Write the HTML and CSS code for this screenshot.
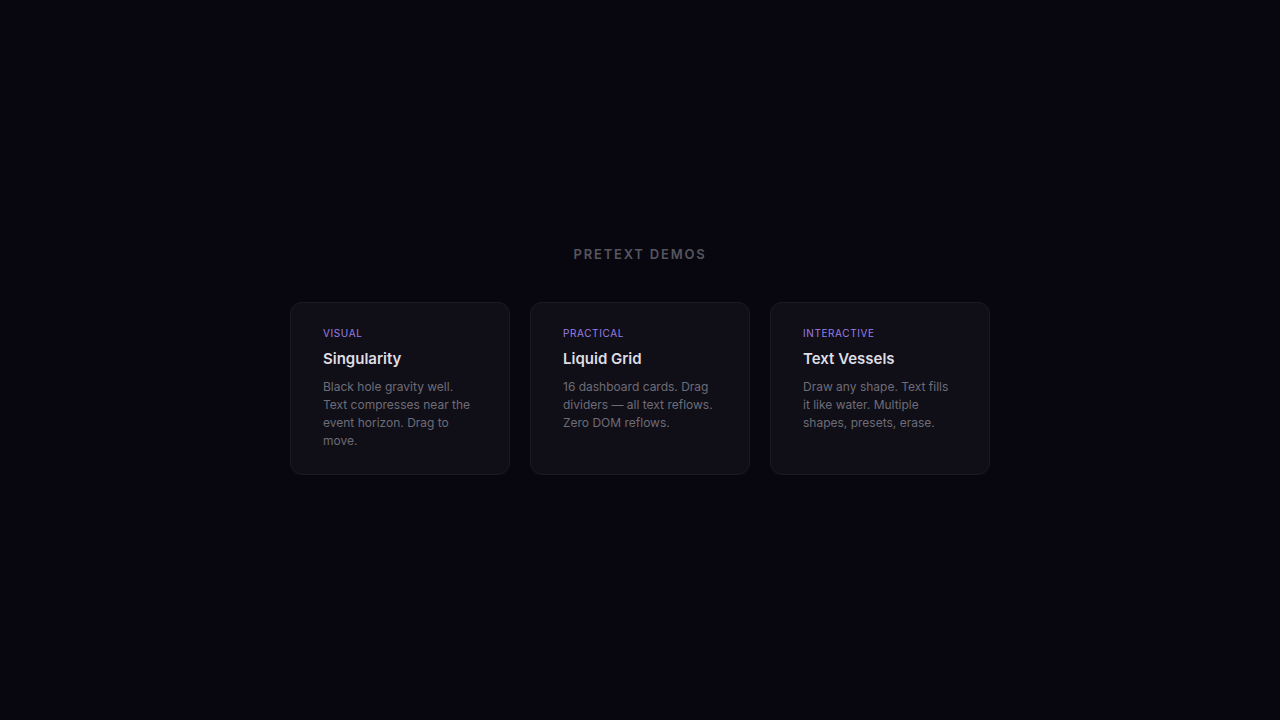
FILE: index.html
```html
<!DOCTYPE html>
<html lang="en">
<head>
<meta charset="utf-8">
<title>Pretext Demos</title>
<link rel="stylesheet" href="styles.css">
</head>
<body>
<main class="page">
  <h1 class="heading">PRETEXT DEMOS</h1>
  <div class="cards">
    <a class="card" href="#">
      <div class="tag">VISUAL</div>
      <div class="title">Singularity</div>
      <p class="desc">Black hole gravity well. Text compresses near the event horizon. Drag to move.</p>
    </a>
    <a class="card" href="#">
      <div class="tag">PRACTICAL</div>
      <div class="title">Liquid Grid</div>
      <p class="desc">16 dashboard cards. Drag dividers — all text reflows. Zero DOM reflows.</p>
    </a>
    <a class="card" href="#">
      <div class="tag">INTERACTIVE</div>
      <div class="title">Text Vessels</div>
      <p class="desc">Draw any shape. Text fills it like water. Multiple shapes, presets, erase.</p>
    </a>
  </div>
</main>
</body>
</html>
```
FILE: styles.css
```css
* { box-sizing: border-box; }
html, body { margin: 0; padding: 0; height: 100%; }
body {
  background: #08070f;
  font-family: Inter, "Noto Sans", sans-serif;
  color: #e0e0e6;
}
.page {
  height: 100%;
  display: flex;
  flex-direction: column;
  align-items: center;
  justify-content: center;
}
.heading {
  margin: 0 0 40px;
  font-size: 13px;
  line-height: 16px;
  font-weight: 600;
  letter-spacing: 1.8px;
  color: #56555f;
}
.cards {
  display: grid;
  grid-template-columns: repeat(3, 220px);
  gap: 20px;
}
.card {
  display: block;
  text-decoration: none;
  background: #100f17;
  border: 1px solid #1c1b25;
  border-radius: 12px;
  padding: 24px 32px;
}
.tag {
  font-size: 10px;
  line-height: 12px;
  letter-spacing: 0.6px;
  color: #9a7de6;
  font-weight: 400;
}
.title {
  margin-top: 10px;
  font-size: 15px;
  line-height: 20px;
  font-weight: 600;
  color: #dedde4;
}
.desc {
  margin: 9px 0 0;
  font-size: 12px;
  line-height: 18px;
  color: #6d6c77;
}
```
